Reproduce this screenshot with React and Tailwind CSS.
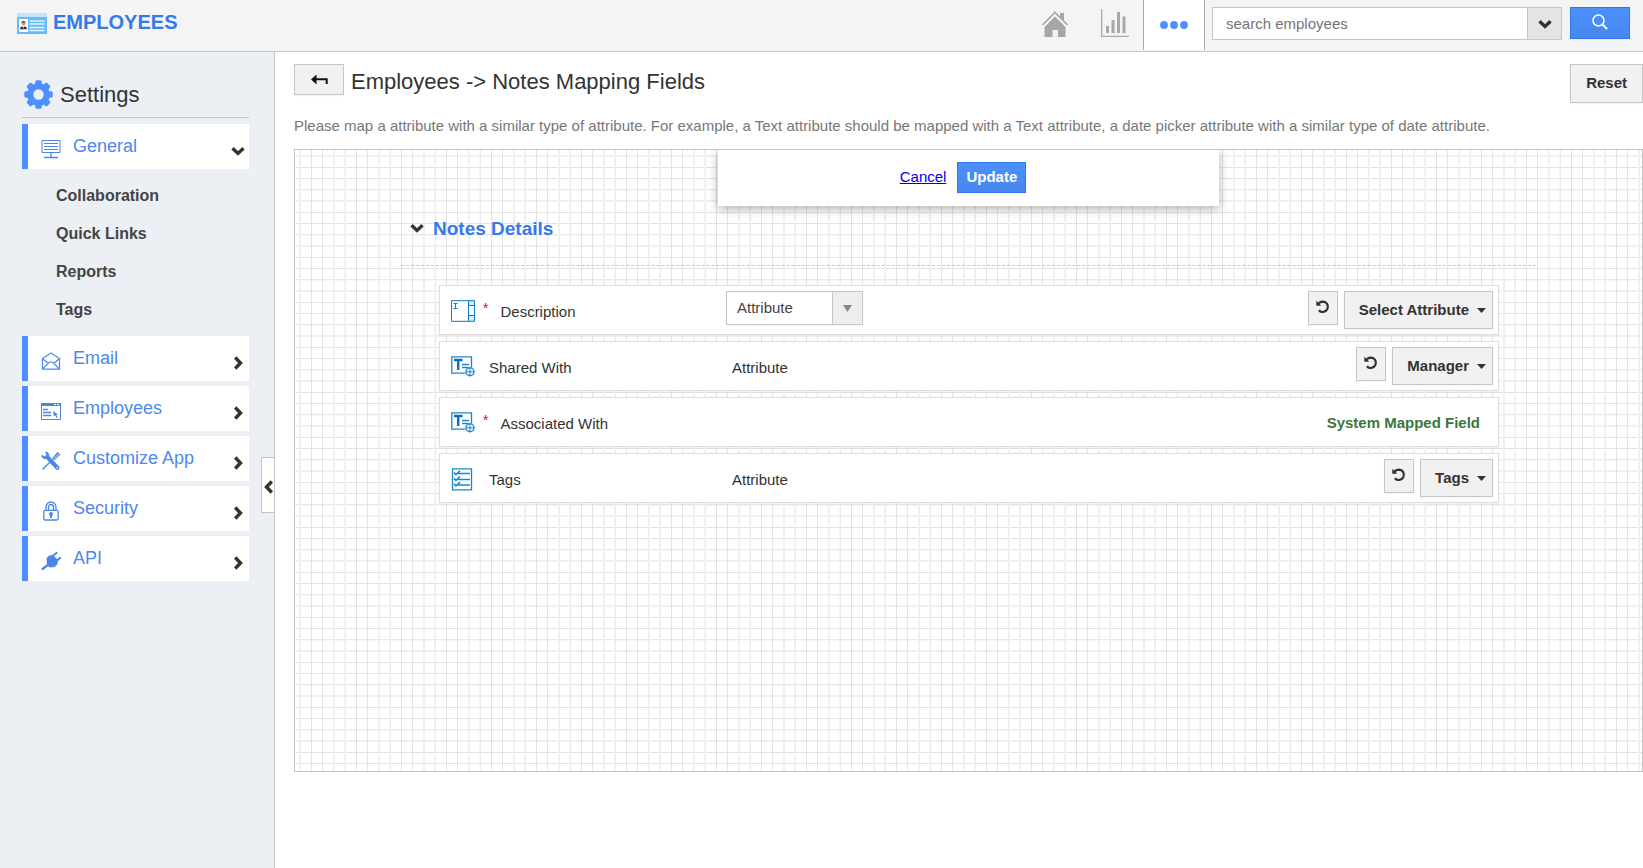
import React, { useState } from 'react';

const GRID_BG =
  'bg-[linear-gradient(to_right,transparent_4px,#f5f5f5_4px,#f5f5f5_5px,#ebebeb_5px,#ebebeb_6px,transparent_6px,transparent_16px,#e2e2e2_16px,#e2e2e2_17px,transparent_17px,transparent_27px,#e4e4e4_27px,#e4e4e4_28px,transparent_28px,transparent_38px,#f0f0f0_38px,#f0f0f0_40px,transparent_40px),linear-gradient(to_bottom,transparent_5px,#f0f0f0_5px,#f0f0f0_7px,transparent_7px,transparent_17px,#e2e2e2_17px,#e2e2e2_18px,transparent_18px,transparent_28px,#e2e2e2_28px,#e2e2e2_29px,transparent_29px,transparent_39px,#e8e8e8_39px,#e8e8e8_40px,#f7f7f7_40px,#f7f7f7_41px,transparent_41px)] bg-[length:45px_45px]';

const EmployeesLogo = () => (
  <svg width="30" height="21" viewBox="0 0 30 21" aria-hidden="true">
    <rect width="30" height="4" fill="#c5e6fa" />
    <rect y="4" width="30" height="17" fill="#64bdf9" />
    <rect x="2" y="6" width="9" height="13" fill="#fff" />
    <circle cx="6.5" cy="10.5" r="2" fill="#d39a7c" />
    <path d="M4.3 10.2a2.2 2.2 0 0 1 4.4 0l-.6-.6H5z" fill="#5b2a26" />
    <path d="M3 16.2c0-2.2 1.5-3 3.5-3s3.5.8 3.5 3z" fill="#33323c" />
    <path d="M5.7 13.2h1.6l-.8 2.6z" fill="#fff" />
    <path d="M12.5 8h15M12.5 11h15M12.5 14.5h15M12.5 17.5h15" stroke="#e3f4ff" strokeWidth="1.5" />
  </svg>
);

const HomeIcon = () => (
  <svg width="26" height="27" viewBox="0 0 26 27" fill="#a6a6a6" aria-hidden="true">
    <path d="M18 2h4v8l-4-4z" />
    <path d="M13 5.5 23.5 16v10H16v-7h-5.500v7h-8V16z" />
    <path d="M.5 14 13 1.5 25.5 14" fill="none" stroke="#a6a6a6" strokeWidth="1.6" />
  </svg>
);

const ChartIcon = () => (
  <svg width="28" height="28" viewBox="0 0 28 28" fill="#a8a8a8" aria-hidden="true">
    <path d="M0 0h1.3v26.7H28V28H0z" />
    <path d="M5 17h3v7H5zM10.5 11h3v13h-3zM16 3h3v21h-3zM21.5 7.5h3V24h-3z" />
  </svg>
);

const GearIcon = () => (
  <svg width="29" height="29" viewBox="-14.5 -14.5 29 29" aria-hidden="true">
    <g fill="#4d90fe">
      {[0, 45, 90, 135].map((deg) => (
        <rect key={deg} x="-3.3" y="-14.3" width="6.6" height="28.6" rx="1.8" transform={`rotate(${deg})`} />
      ))}
      <circle r="11.3" />
    </g>
    <circle r="5.2" fill="#ecf0f5" />
  </svg>
);

// Thick chevron, rotated for each direction
const Chevron = ({ dir = 'down' }) => {
  const deg = { down: 0, left: 90, up: 180, right: 270 }[dir];
  return (
    <svg width="14" height="14" viewBox="0 0 14 14" className="shrink-0" aria-hidden="true">
      <path d="M1.500 4.200 7 9.500l5.500-5.300" fill="none" stroke="#333" strokeWidth="3.4" transform={`rotate(${deg} 7 7)`} />
    </svg>
  );
};

const Caret = () => (
  <svg width="9" height="5" viewBox="0 0 9 5" aria-hidden="true">
    <path d="M0 0h9L4.5 5z" fill="#333" />
  </svg>
);

const UndoIcon = () => (
  <svg width="14" height="14" viewBox="0 0 14 14" fill="none" stroke="#333" aria-hidden="true">
    <path d="M2.200 4.200C3.500 2.300 5.200 1.600 7 1.600a5.200 5.200 0 1 1-4.200 8.600" strokeWidth="2.2" />
    <path d="M.3.8v5h5z" fill="#333" stroke="none" />
  </svg>
);

const BoardIcon = () => (
  <svg width="20" height="20" viewBox="0 0 20 20" fill="none" stroke="#4a86e8" aria-hidden="true">
    <path d="M1 1.500h18v12H1z" />
    <path d="M3 4.500h14M3 7.500h14M3 10.500h14" strokeWidth="1.2" />
    <path d="M10 13.500V18M3 18.500h14" strokeWidth="1.3" />
  </svg>
);

const MailIcon = () => (
  <svg width="20" height="20" viewBox="0 0 20 20" fill="none" stroke="#4a8af0" strokeWidth="1.2" aria-hidden="true">
    <path d="M1.500 7.500 10 2l8.500 5.500v10.700h-17z" />
    <path d="m1.500 7.500 5.800 5M18.500 7.500l-5.800 5M1.500 18.200 8 11.500q2-1.500 4 0l6.500 6.700" />
  </svg>
);

const WindowIcon = () => (
  <svg width="20" height="20" viewBox="0 0 20 20" fill="none" stroke="#4a86e8" aria-hidden="true">
    <path d="M.5 2.500h19v16H.5z" />
    <path d="M0 3.500h20" strokeWidth="3" />
    <path d="M13 3.500h2m1 0h2" stroke="#fff" />
    <path d="M2 8.500h5M2 11.500h8M2 14.500h8" strokeWidth="1.4" />
    <path d="m12 10 1 5.500 1.200-1.200 1.500 2.700 1-.6-1.400-2.500 1.700-.4z" fill="#4a86e8" stroke="none" />
  </svg>
);

const ToolsIcon = () => (
  <svg width="20" height="20" viewBox="0 0 20 20" fill="#4a86e8" aria-hidden="true">
    <path d="m1.500 18.500 7-7" stroke="#4a86e8" strokeWidth="1.5" />
    <path d="M11 7.500 16.500 1l3 2.500L13 9.500z" />
    <path d="m12.800 7.800 5-5" stroke="#fff" strokeWidth=".8" />
    <path d="M.5 3.500 3.500 5.500 5.500 3.800 4 .8C6.500.3 8.600 2.300 8.100 5l9.800 10.200a2.100 2.100 0 0 1-3 3L5.200 8.100C2.500 8.500.2 6.500.5 3.500z" />
    <circle cx="16.2" cy="16.7" r=".8" fill="#fff" />
  </svg>
);

const LockIcon = () => (
  <svg width="20" height="20" viewBox="0 0 20 20" fill="none" stroke="#4a86e8" strokeWidth="1.3" aria-hidden="true">
    <path d="M5 9.500V6a5 5 0 0 1 10 0v3.500M7.500 9.500V6a2.500 2.500 0 0 1 5 0v3.500" />
    <rect x="2.800" y="9.300" width="14.400" height="9.700" rx="1.500" />
    <circle cx="10" cy="13" r="1.300" fill="#4a86e8" />
    <path d="M10 13v4" strokeWidth="2" />
  </svg>
);

const PlugIcon = () => (
  <svg width="20" height="20" viewBox="0 0 20 20" aria-hidden="true">
    <path d="M5.500 7.500 8 4.500l4-.5 5 5-.5 4-3 3-5 .5-2.500-2.500z" fill="#4a86e8" />
    <path d="m1.500 18 6-4.500M11 5.500l4.500-3.500M15.500 10 19 7" stroke="#4a86e8" strokeWidth="2.2" strokeLinecap="round" fill="none" />
  </svg>
);

const TextAreaIcon = () => (
  <svg width="24" height="22" viewBox="0 0 24 22" fill="none" stroke="#0c7bc0" aria-hidden="true">
    <path d="M17 1h6v20h-6z" fill="#cdeefa" stroke="none" />
    <path d="M17 6h6v9h-6z" fill="#fff" stroke="none" />
    <path d="M.5.7h23v20.600H.5zM17.500 1v20M18 5.500h5M18 15.500h5" />
    <path d="M2.500 3.500h4M4.500 3.500v5M2.500 8.500h4" />
  </svg>
);

const TextPlusIcon = () => (
  <svg width="24" height="21" viewBox="0 0 24 21" fill="none" stroke="#1c88c9" aria-hidden="true">
    <path d="M20.500 11V.8H.8v16.400h13.400" strokeWidth="1.3" />
    <path d="M3 4h8.500M7.200 4v10" stroke="#0a6fb8" strokeWidth="2.4" />
    <path d="M11 8.500h7M11 11.500h6" strokeWidth="1.4" />
    <circle cx="19" cy="15.8" r="4" fill="#fff" strokeWidth="1.4" />
    <path d="M19 12v7.600M15.200 15.800h7.600" />
  </svg>
);

const ChecklistIcon = () => (
  <svg width="22" height="23" viewBox="0 0 22 23" fill="none" stroke="#1c88c9" aria-hidden="true">
    <path d="M1.500.8h19v21h-19z" strokeWidth="1.3" />
    <path d="M7 5.500h12M7 11.500h12M7 17h12" strokeWidth="1.4" />
    <path d="m3 4.500 2 2L9 2.800M3 10.300l2 2 4-3.700M3 15.800l2 2 4-3.700" strokeWidth="1.7" />
  </svg>
);

const menu = [
  { label: 'General', icon: BoardIcon, children: ['Collaboration', 'Quick Links', 'Reports', 'Tags'] },
  { label: 'Email', icon: MailIcon },
  { label: 'Employees', icon: WindowIcon },
  { label: 'Customize App', icon: ToolsIcon },
  { label: 'Security', icon: LockIcon },
  { label: 'API', icon: PlugIcon },
];

const fields = [
  { label: 'Description', icon: TextAreaIcon, required: true, type: 'select', value: 'Select Attribute' },
  { label: 'Shared With', icon: TextPlusIcon, type: 'text', value: 'Manager' },
  { label: 'Associated With', icon: TextPlusIcon, required: true, system: true },
  { label: 'Tags', icon: ChecklistIcon, type: 'text', value: 'Tags' },
];

const Header = () => (
  <header className="flex h-[52px] items-start border-b border-[#c8c8c8] bg-[#f4f4f4]">
    <a href="#employees" className="flex items-start gap-[6px] pt-3 pl-[17px]">
      <span className="mt-px">
        <EmployeesLogo />
      </span>
      <span className="text-[20px] leading-5 font-bold text-[#357ae8]">EMPLOYEES</span>
    </a>
    <nav className="ml-auto flex items-start">
      <a href="#home" aria-label="Home" className="mt-[11px] mr-[33px]">
        <HomeIcon />
      </a>
      <a href="#reports" aria-label="Reports" className="mt-[9px] mr-[14px]">
        <ChartIcon />
      </a>
      <button
        type="button"
        aria-label="More"
        className="flex h-[50px] w-[62px] items-center justify-center border-x border-[#aaa] bg-white"
      >
        <svg width="28" height="8" viewBox="0 0 28 8" fill="#4d90fe" aria-hidden="true">
          <circle cx="4" cy="4" r="3.9" />
          <circle cx="14" cy="4" r="3.9" />
          <circle cx="24" cy="4" r="3.9" />
        </svg>
      </button>
    </nav>
    <form className="mt-[7px] mr-[13px] ml-[7px] flex items-start" onSubmit={(e) => e.preventDefault()}>
      <input
        type="text"
        aria-label="search employees"
        placeholder="search employees"
        className="h-[33px] w-[316px] border border-[#c6c6c6] bg-white px-[13px] text-[15px] text-[#444] outline-none placeholder:text-[#757575]"
      />
      <button
        type="button"
        aria-label="Search options"
        className="flex h-[33px] w-[34px] items-center justify-center border border-l-0 border-[#c6c6c6] bg-[#e4e4e4]"
      >
        <Chevron />
      </button>
      <button
        type="submit"
        aria-label="Search"
        className="ml-2 flex h-8 w-[60px] items-center justify-center border border-[#3079ed] bg-linear-to-b from-[#4d90fe] to-[#4787ed] pb-0.5 shadow-xs"
      >
        <svg width="16" height="16" viewBox="0 0 16 16" fill="none" stroke="#fff" strokeWidth="1.5" aria-hidden="true">
          <circle cx="6.5" cy="6.5" r="5.5" />
          <path d="m10.500 10.500 4.500 4.500" strokeWidth="2" />
        </svg>
      </button>
    </form>
  </header>
);

const Sidebar = () => {
  const [open, setOpen] = useState('General');

  return (
    <aside className="relative w-[275px] shrink-0 border-r border-[#c4c4c4] bg-[#ecf0f5] pr-[25px] pl-[22px]">
      <h2 className="mt-6 flex h-[42px] items-center gap-[7px] border-b border-[#c4c4c4] pb-1 pl-0.5 text-[22px] text-[#333]">
        <GearIcon />
        Settings
      </h2>
      <ul className="mt-[6px]">
        {menu.map(({ label, icon: Icon, children }) => (
          <li key={label} className="mb-[5px]">
            <button
              type="button"
              onClick={() => setOpen(open === label ? '' : label)}
              className="flex h-[45px] w-full items-center border-l-6 border-[#4d90fe] bg-white pr-1 pl-[13px] text-[18px] text-[#4d87ee]"
            >
              <span className="mt-1">
                <Icon />
              </span>
              <span className="ml-[12px]">{label}</span>
              <span className="mt-2 ml-auto">
                <Chevron dir={open === label ? 'down' : 'right'} />
              </span>
            </button>
            {children && open === label && (
              <ul className="pt-2 pb-0.5 pl-[34px]">
                {children.map((child) => (
                  <li key={child}>
                    <a href="#settings" className="block text-[16px] leading-[38px] font-bold text-[#444]">
                      {child}
                    </a>
                  </li>
                ))}
              </ul>
            )}
          </li>
        ))}
      </ul>
      <button
        type="button"
        aria-label="Collapse sidebar"
        className="absolute top-[405px] right-0 flex h-14 w-[13px] items-center overflow-hidden border border-r-0 border-[#c4c4c4] bg-white pt-1"
      >
        <Chevron dir="left" />
      </button>
    </aside>
  );
};

const FieldRow = ({ field }) => {
  const Icon = field.icon;
  return (
    <li className="flex h-[50px] items-start border border-[#dcdcdc] bg-white pr-[5px] pl-[11px] shadow-xs">
      <div className="flex w-[275px] shrink-0 items-start text-[15px] leading-5 text-[#333]">
        <span className="mt-[14px] w-[26px]">
          <Icon />
        </span>
        {field.required && <span className="mt-[12px] ml-[6px] text-[14px] text-[#f00]">*</span>}
        <span className="mt-4 ml-[12px]">{field.label}</span>
      </div>
      {field.type === 'select' && (
        <div className="relative mt-[5px]">
          <select
            aria-label="Mapping type"
            className="h-[34px] w-[137px] appearance-none border border-[#c6c6c6] bg-white pl-[10px] text-[15px] text-[#444] shadow-xs outline-none"
          >
            <option>Attribute</option>
          </select>
          <span className="pointer-events-none absolute top-px right-px bottom-px flex w-[30px] items-center justify-center border-l border-[#c6c6c6] bg-[#eee]">
            <svg width="9" height="7" viewBox="0 0 9 7" aria-hidden="true">
              <path d="M0 0h9L4.5 7z" fill="#888" />
            </svg>
          </span>
        </div>
      )}
      {field.type === 'text' && (
        <span className="mt-4 ml-[6px] text-[15px] leading-5 text-[#333]">Attribute</span>
      )}
      {field.system ? (
        <span className="mt-[15px] mr-[13px] ml-auto text-[15px] leading-5 font-bold text-[#3c763d]">
          System Mapped Field
        </span>
      ) : (
        <div className="mt-[5px] ml-auto flex items-start gap-[6px]">
          <button
            type="button"
            aria-label={`Reset ${field.label}`}
            className="flex h-[34px] w-[30px] items-center justify-center border border-[#c6c6c6] bg-[#f1f1f1] pb-0.5 shadow-xs"
          >
            <UndoIcon />
          </button>
          <button
            type="button"
            className="flex h-[38px] items-center gap-[8px] border border-[#c6c6c6] bg-[#f1f1f1] pr-[6px] pl-[14px] text-[15px] font-bold text-[#333] shadow-xs"
          >
            {field.value}
            <Caret />
          </button>
        </div>
      )}
    </li>
  );
};

const MappingPanel = () => (
  <section className={`flex-1 border border-[#c4c4c4] bg-white ${GRID_BG}`}>
    <div className="mx-auto flex h-14 w-[501px] items-center justify-center gap-[11px] bg-white pr-[11px] pb-0.5 shadow-[0_3px_10px_rgba(0,0,0,0.3)] [clip-path:inset(0_-14px_-16px_-14px)]">
      <a href="#cancel" className="text-[15px] text-[#0000ee] underline">
        Cancel
      </a>
      <button
        type="button"
        className="h-[31px] border border-[#3079ed] bg-linear-to-b from-[#4d90fe] to-[#4787ed] px-2 text-[15px] font-bold text-white shadow-xs"
      >
        Update
      </button>
    </div>
    <div className="mx-[106px]">
      <h3 className="flex h-[60px] items-start gap-[9px] border-b border-dashed border-[#c8c8c8] pt-[11px] pl-[9px] text-[19px] leading-6 font-bold text-[#357ae8]">
        <span className="mt-1">
          <Chevron />
        </span>
        Notes Details
      </h3>
      <ul className="mt-[19px] mr-[37px] ml-[38px] flex flex-col gap-[6px]">
        {fields.map((field) => (
          <FieldRow key={field.label} field={field} />
        ))}
      </ul>
    </div>
  </section>
);

export default function App() {
  return (
    <div className="flex min-h-screen flex-col bg-white font-['Liberation_Sans',Arial,sans-serif]">
      <Header />
      <div className="flex flex-1">
        <Sidebar />
        <main className="flex min-w-0 flex-1 flex-col pt-3 pb-24 pl-[19px]">
          <div className="flex items-start">
            <button
              type="button"
              aria-label="Back"
              className="flex h-[31px] w-[50px] items-center justify-center border border-[#c6c6c6] bg-[#f1f1f1] shadow-xs"
            >
              <svg width="17" height="11" viewBox="0 0 17 11" aria-hidden="true">
                <path d="M0 5.500 5.500.5v10z" fill="#111" />
                <path d="M4 5.200h11.700V10" fill="none" stroke="#111" strokeWidth="2" />
              </svg>
            </button>
            <h1 className="ml-[7px] text-[22px] leading-9 text-[#333]">Employees -&gt; Notes Mapping Fields</h1>
            <button
              type="button"
              className="ml-auto h-[39px] border border-[#c6c6c6] bg-[#f1f1f1] px-[15px] text-[15px] font-bold text-[#333] shadow-xs"
            >
              Reset
            </button>
          </div>
          <p className="my-[13px] text-[15px] leading-5 text-[#777]">
            Please map a attribute with a similar type of attribute. For example, a Text attribute should be mapped with a
            Text attribute, a date picker attribute with a similar type of date attribute.
          </p>
          <MappingPanel />
        </main>
      </div>
    </div>
  );
}
